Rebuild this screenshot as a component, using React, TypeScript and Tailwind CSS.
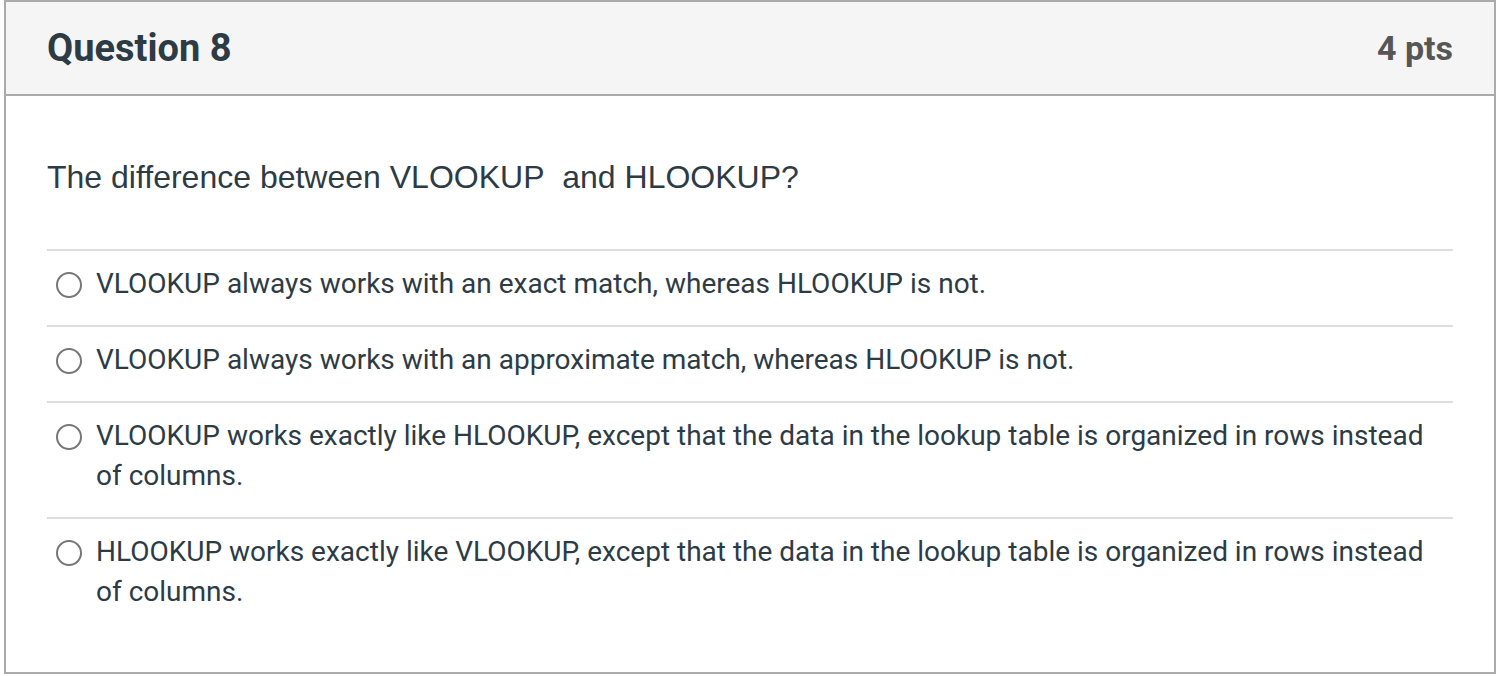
const answers = [
  'VLOOKUP always works with an exact match, whereas HLOOKUP is not.',
  'VLOOKUP always works with an approximate match, whereas HLOOKUP is not.',
  'VLOOKUP works exactly like HLOOKUP, except that the data in the lookup table is organized in rows instead of columns.',
  'HLOOKUP works exactly like VLOOKUP, except that the data in the lookup table is organized in rows instead of columns.',
];

export default function App() {
  return (
    <div className="w-[1502px] h-[676px] bg-white" style={{ fontFamily: 'Roboto, "Liberation Sans", sans-serif' }}>
      <div className="ml-[4px] mr-[6px] h-[674px] border-2 border-[#aaaaaa] flex flex-col">
        {/* header */}
        <div className="h-[94px] shrink-0 bg-[#f5f5f5] border-b-2 border-[#aaaaaa] flex items-center justify-between px-[41px]">
          <h2 className="text-[38px] font-bold text-[#2d3b45]">Question 8</h2>
          <span className="text-[34px] font-bold text-[#565656]">4 pts</span>
        </div>

        {/* body */}
        <div className="px-[41px] pt-[57px]">
          <p
            className="text-[32px] leading-[48px] text-[#2d3b45] mb-[48px]"
            style={{ fontFamily: '"Liberation Sans", Arial, sans-serif' }}
          >
            The difference between VLOOKUP&nbsp; and HLOOKUP?
          </p>

          <div>
            {answers.map((a, i) => (
              <label key={i} className="flex items-start border-t-2 border-[#dddddd] pt-[13px] pb-[21px] pl-[9px] pr-[20px]">
                <span className="mt-[8px] w-[26px] h-[26px] shrink-0 rounded-full border-2 border-[#777777] bg-white"></span>
                <span className="ml-[14px] text-[28px] leading-[40px] text-[#2d3b45]">{a}</span>
              </label>
            ))}
          </div>
        </div>
      </div>
    </div>
  );
}
